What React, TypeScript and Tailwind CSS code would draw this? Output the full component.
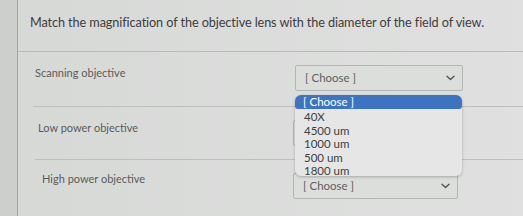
import React from "react";

const Chevron = () => (
  <svg width="9" height="6" viewBox="0 0 9 6" fill="none">
    <path d="M1 1.2 L4.5 4.6 L8 1.2" stroke="#555" strokeWidth="1.4" strokeLinecap="round" strokeLinejoin="round" />
  </svg>
);

const Select = ({ className, label = "[ Choose ]" }: { className: string; label?: string }) => (
  <div className={`flex items-center justify-between h-[26px] border border-[#b4b6b4] bg-[#dcdedc] rounded-[2px] pl-[9px] pr-[7px] ${className}`}>
    <span className="text-[11.5px] text-[#5c5e5c]">{label}</span>
    <Chevron />
  </div>
);

export default function App() {
  const options = ["40X", "4500 um", "1000 um", "500 um", "1800 um"];
  return (
    <div
      className="relative w-[523px] h-[216px] overflow-hidden flex bg-[#d8dad8]"
      style={{ fontFamily: "Lato, 'Open Sans', sans-serif" }}
    >
      <div className="w-[18px] shrink-0 bg-[#cdcfcd] border-r border-[#a3a5a3]" />
      <div className="flex-1 flex flex-col bg-gradient-to-r from-[#d7d9d7] to-[#dfe0df]">
        <div className="h-[52px] pl-[12px] pt-[13px] border-b border-[#b9bbb9]">
          <p className="text-[12.7px] text-[#3e403e] tracking-[-0.1px]">
            Match the magnification of the objective lens with the diameter of the field of view.
          </p>
        </div>
        <div className="h-[55px] flex border-b border-[#bdbfbd] ml-[15px]">
          <div className="w-[262px] pl-[2px] pt-[13px] text-[11px] text-[#5a5c5a]">Scanning objective</div>
          <Select className="w-[168px] mt-[13px]" />
        </div>
        <div className="h-[53px] flex border-b border-[#bdbfbd] ml-[17px]">
          <div className="w-[258px] pl-[3px] pt-[13px] text-[11px] text-[#5a5c5a]">Low power objective</div>
          <Select className="w-[166px] mt-[13px]" label="" />
        </div>
        <div className="flex-1 flex ml-[19px]">
          <div className="w-[256px] pl-[5px] pt-[11px] text-[11px] text-[#5a5c5a]">High power objective</div>
          <Select className="w-[165px] mt-[13px]" />
        </div>
      </div>
      <div className="absolute left-[295px] top-[95px] w-[167px] h-[81px] bg-[#e5e6e5] rounded-[6px] shadow-[0_1px_3px_rgba(0,0,0,0.25)] flex flex-col">
        <div className="h-[14px] bg-[#3d74c2] rounded-t-[6px] rounded-b-[3px] pl-[8px] text-[11.5px] leading-[14px] text-white">[ Choose ]</div>
        <div className="pt-[1px] flex flex-col">
          {options.map((o) => (
            <div key={o} className="h-[13.5px] pl-[9px] text-[11.5px] leading-[13.5px] text-[#3f413f]">{o}</div>
          ))}
        </div>
      </div>
    </div>
  );
}
